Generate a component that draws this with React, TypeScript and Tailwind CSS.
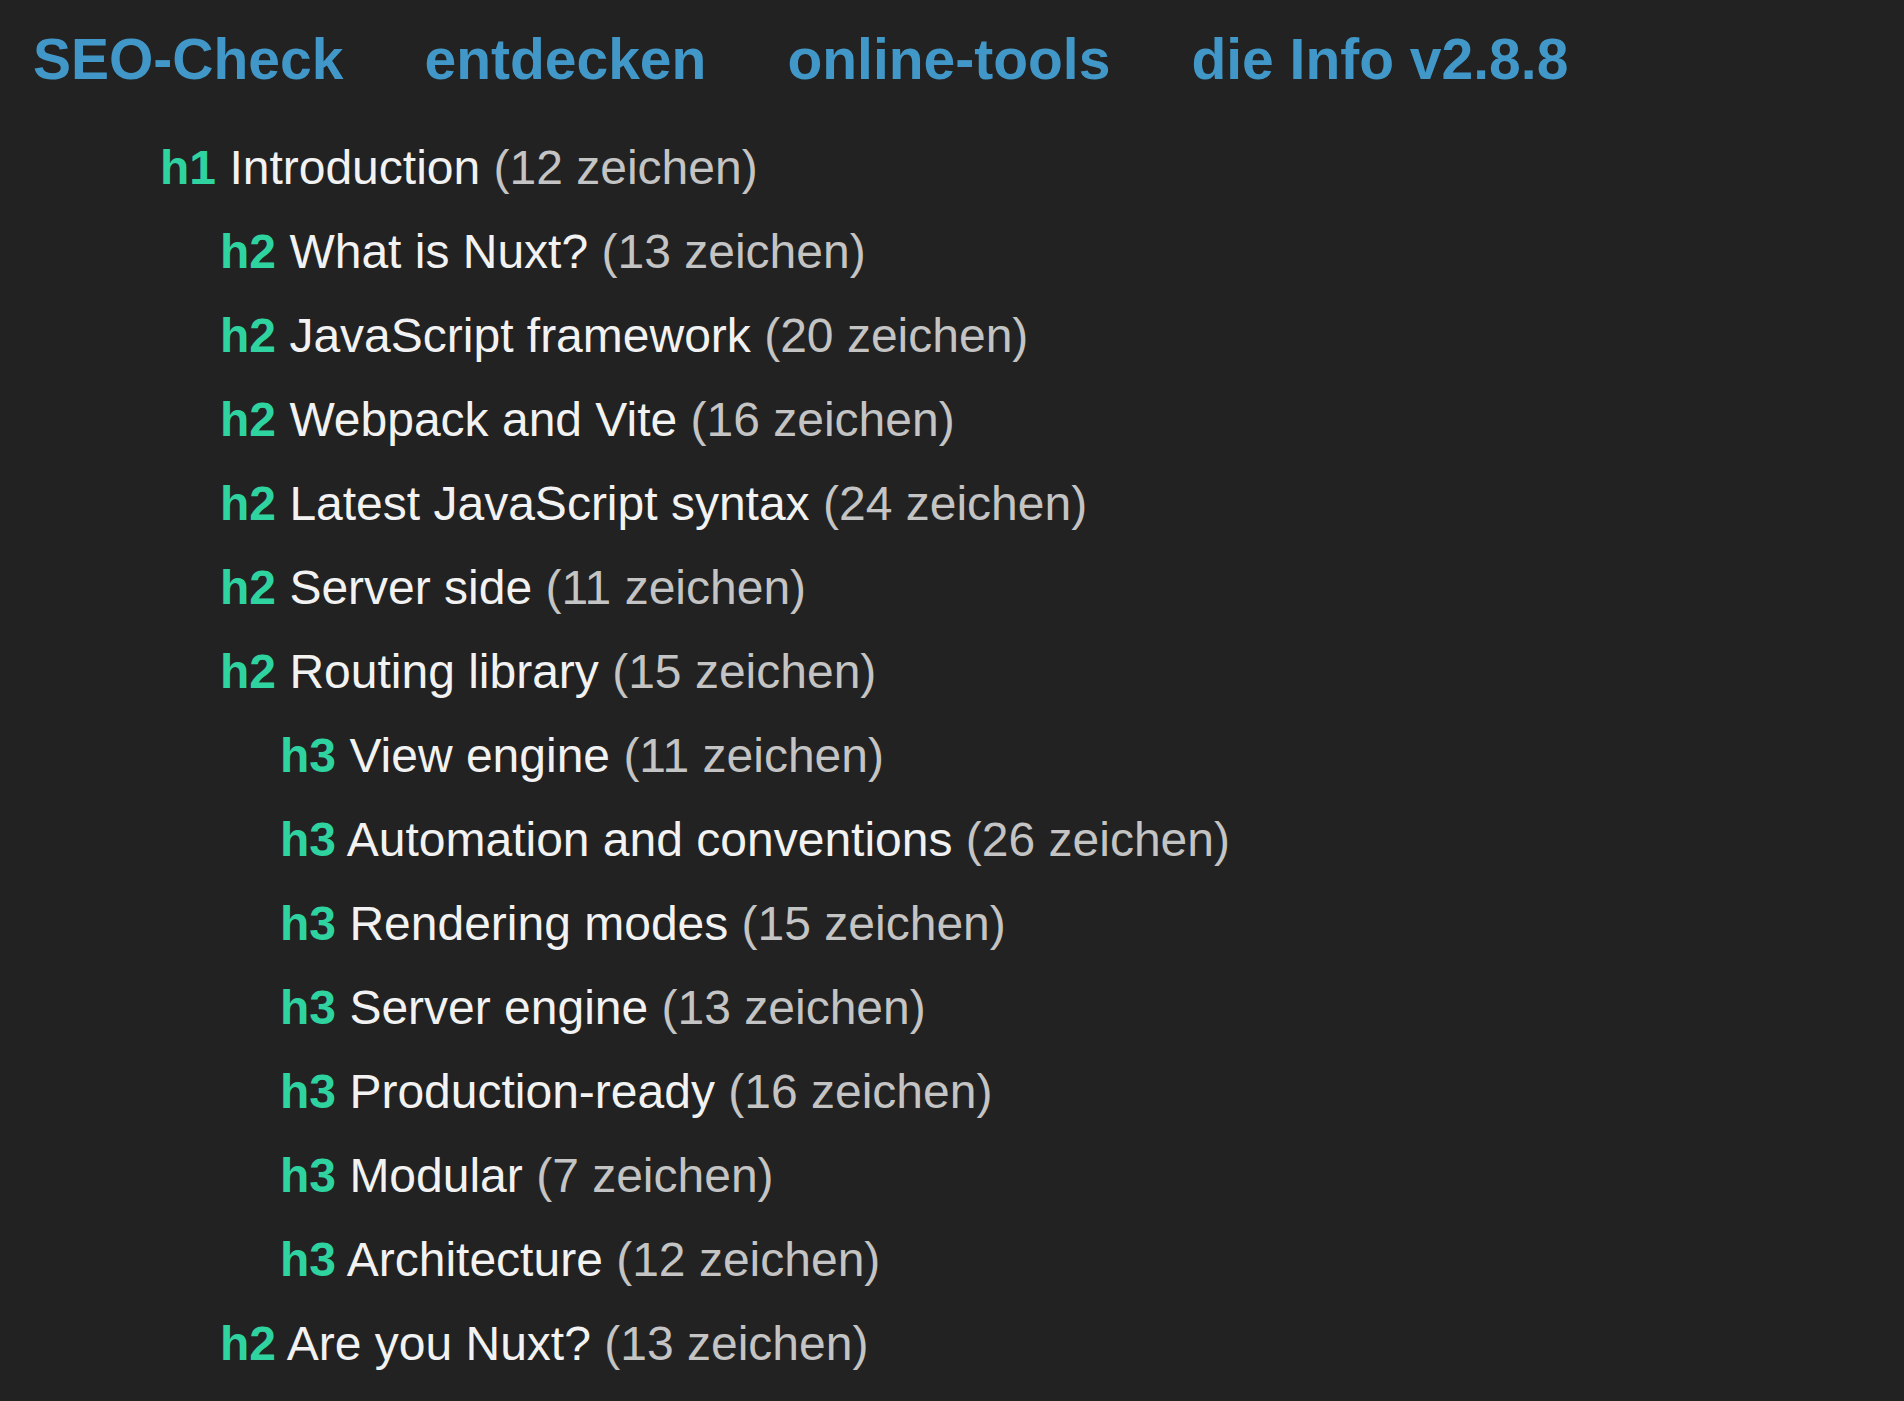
import React from "react";

type Heading = { level: 1 | 2 | 3; text: string };

const headings: Heading[] = [
  { level: 1, text: "Introduction" },
  { level: 2, text: "What is Nuxt?" },
  { level: 2, text: "JavaScript framework" },
  { level: 2, text: "Webpack and Vite" },
  { level: 2, text: "Latest JavaScript syntax" },
  { level: 2, text: "Server side" },
  { level: 2, text: "Routing library" },
  { level: 3, text: "View engine" },
  { level: 3, text: "Automation and conventions" },
  { level: 3, text: "Rendering modes" },
  { level: 3, text: "Server engine" },
  { level: 3, text: "Production-ready" },
  { level: 3, text: "Modular" },
  { level: 3, text: "Architecture" },
  { level: 2, text: "Are you Nuxt?" },
];

const nav = ["SEO-Check", "entdecken", "online-tools", "die Info v2.8.8"];

// indent per heading level
const indent: Record<number, string> = {
  1: "pl-[160px]",
  2: "pl-[220px]",
  3: "pl-[280px]",
};

export default function App() {
  return (
    <div
      className="min-h-[1401px] bg-[#222222] text-[#f2f2f2]"
      style={{ fontFamily: '"Liberation Sans", Arial, sans-serif' }}
    >
      {/* top nav */}
      <nav className="flex gap-[81px] pl-[33px] pt-[26px] text-[57px] font-bold leading-[67px] text-[#4198c8]">
        {nav.map((n) => (
          <a key={n} href="#">
            {n}
          </a>
        ))}
      </nav>

      {/* heading outline */}
      <ul className="mt-[33px] text-[48px] leading-[84px]">
        {headings.map((h, i) => (
          <li key={i} className={`whitespace-nowrap ${indent[h.level]}`}>
            <span className="font-bold text-[#2fd3a0]">h{h.level}</span>{" "}
            <span className="text-[#f2f2f2]">{h.text}</span>{" "}
            <span className="text-[#c4c4c4]">({h.text.length} zeichen)</span>
          </li>
        ))}
      </ul>
    </div>
  );
}
